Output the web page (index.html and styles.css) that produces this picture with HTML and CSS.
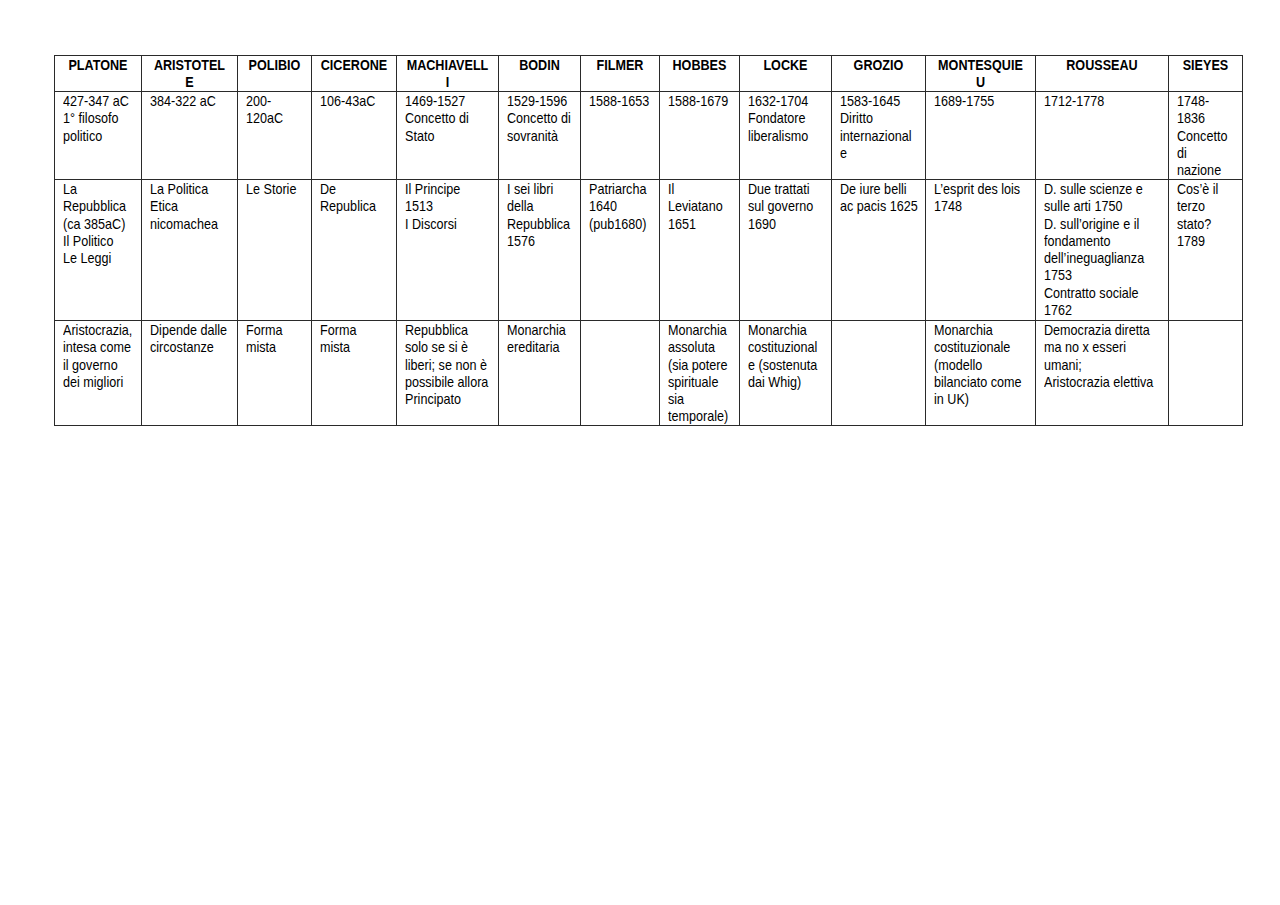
FILE: index.html
```html
<!DOCTYPE html>
<html lang="it">
<head>
<meta charset="utf-8">
<title>Pensatori politici</title>
<link rel="stylesheet" href="styles.css">
</head>
<body>
<table class="grid">
<colgroup>
<col class="c1"><col class="c2"><col class="c3"><col class="c4"><col class="c5"><col class="c6"><col class="c7"><col class="c8"><col class="c9"><col class="c10"><col class="c11"><col class="c12"><col class="c13">
</colgroup>
<tr class="head">
<th><div class="t">PLATONE</div></th>
<th><div class="t">ARISTOTEL<br>E</div></th>
<th><div class="t">POLIBIO</div></th>
<th><div class="t">CICERONE</div></th>
<th><div class="t">MACHIAVELL<br>I</div></th>
<th><div class="t">BODIN</div></th>
<th><div class="t">FILMER</div></th>
<th><div class="t">HOBBES</div></th>
<th><div class="t">LOCKE</div></th>
<th><div class="t">GROZIO</div></th>
<th><div class="t">MONTESQUIE<br>U</div></th>
<th><div class="t">ROUSSEAU</div></th>
<th><div class="t">SIEYES</div></th>
</tr>
<tr class="r1">
<td><div class="t">427-347 aC<br>1° filosofo<br>politico</div></td>
<td><div class="t">384-322 aC</div></td>
<td><div class="t">200-<br>120aC</div></td>
<td><div class="t">106-43aC</div></td>
<td><div class="t">1469-1527<br>Concetto di<br>Stato</div></td>
<td><div class="t">1529-1596<br>Concetto di<br>sovranità</div></td>
<td><div class="t">1588-1653</div></td>
<td><div class="t">1588-1679</div></td>
<td><div class="t">1632-1704<br>Fondatore<br>liberalismo</div></td>
<td><div class="t">1583-1645<br>Diritto<br>internazional<br>e</div></td>
<td><div class="t">1689-1755</div></td>
<td><div class="t">1712-1778</div></td>
<td><div class="t">1748-<br>1836<br>Concetto<br>di<br>nazione</div></td>
</tr>
<tr class="r2">
<td><div class="t">La<br>Repubblica<br>(ca 385aC)<br>Il Politico<br>Le Leggi</div></td>
<td><div class="t">La Politica<br>Etica<br>nicomachea</div></td>
<td><div class="t">Le Storie</div></td>
<td><div class="t">De<br>Republica</div></td>
<td><div class="t">Il Principe<br>1513<br>I Discorsi</div></td>
<td><div class="t">I sei libri<br>della<br>Repubblica<br>1576</div></td>
<td><div class="t">Patriarcha<br>1640<br>(pub1680)</div></td>
<td><div class="t">Il<br>Leviatano<br>1651</div></td>
<td><div class="t">Due trattati<br>sul governo<br>1690</div></td>
<td><div class="t">De iure belli<br>ac pacis 1625</div></td>
<td><div class="t">L’esprit des lois<br>1748</div></td>
<td><div class="t">D. sulle scienze e<br>sulle arti 1750<br>D. sull’origine e il<br>fondamento<br>dell’ineguaglianza<br>1753<br>Contratto sociale<br>1762</div></td>
<td><div class="t">Cos’è il<br>terzo<br>stato?<br>1789</div></td>
</tr>
<tr class="r3">
<td><div class="t">Aristocrazia,<br>intesa come<br>il governo<br>dei migliori</div></td>
<td><div class="t">Dipende dalle<br>circostanze</div></td>
<td><div class="t">Forma<br>mista</div></td>
<td><div class="t">Forma<br>mista</div></td>
<td><div class="t">Repubblica<br>solo se si è<br>liberi; se non è<br>possibile allora<br>Principato</div></td>
<td><div class="t">Monarchia<br>ereditaria</div></td>
<td></td>
<td><div class="t">Monarchia<br>assoluta<br>(sia potere<br>spirituale<br>sia<br>temporale)</div></td>
<td><div class="t">Monarchia<br>costituzional<br>e (sostenuta<br>dai Whig)</div></td>
<td></td>
<td><div class="t">Monarchia<br>costituzionale<br>(modello<br>bilanciato come<br>in UK)</div></td>
<td><div class="t">Democrazia diretta<br>ma no x esseri<br>umani;<br>Aristocrazia elettiva</div></td>
<td></td>
</tr>
</table>
</body>
</html>
```

FILE: styles.css
```css
html, body {
  margin: 0;
  padding: 0;
  background: #ffffff;
}

body {
  font-family: "Liberation Sans", Arial, sans-serif;
  font-size: 15px;
  line-height: 17.3px;
  color: #000000;
}

.grid {
  margin: 55px 0 0 54px;
  border-collapse: collapse;
  table-layout: fixed;
  width: 1189px;
}

.c1 { width: 87px; }
.c2 { width: 96px; }
.c3 { width: 74px; }
.c4 { width: 85px; }
.c5 { width: 102px; }
.c6 { width: 82px; }
.c7 { width: 79px; }
.c8 { width: 80px; }
.c9 { width: 92px; }
.c10 { width: 94px; }
.c11 { width: 110px; }
.c12 { width: 133px; }
.c13 { width: 74px; }

.grid th,
.grid td {
  border: 1px solid #2a2a2a;
  padding: 0 0 0 8px;
  vertical-align: top;
  white-space: nowrap;
  overflow: visible;
}

.grid th {
  font-weight: bold;
  text-align: center;
  padding: 0;
}

.grid td {
  text-align: left;
  font-weight: normal;
}

/* narrow face: Arial-Narrow-like horizontal condensing */
.t {
  width: 119%;
  transform: scaleX(0.84);
  transform-origin: 0 0;
}

.head { height: 36px; }
.r1 { height: 88px; }
.r2 { height: 141px; }
.r3 { height: 105px; }
```
